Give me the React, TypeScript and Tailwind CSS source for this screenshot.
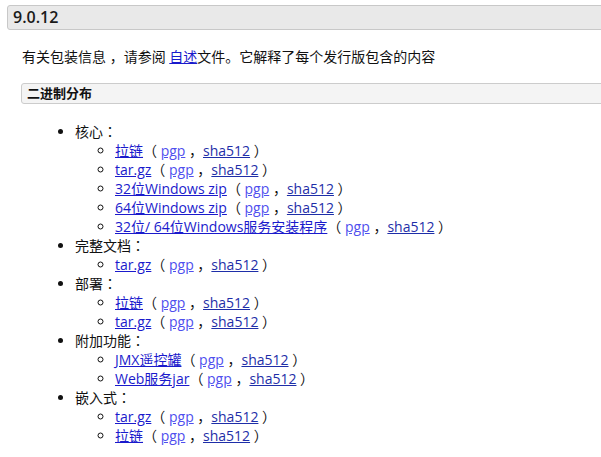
import React from "react";

type Item = { label: string };
type Group = { title: string; items: string[] };

const groups: Group[] = [
  {
    title: "核心",
    items: [
      "拉链",
      "tar.gz",
      "32位Windows zip",
      "64位Windows zip",
      "32位/ 64位Windows服务安装程序",
    ],
  },
  { title: "完整文档", items: ["tar.gz"] },
  { title: "部署", items: ["拉链", "tar.gz"] },
  { title: "附加功能", items: ["JMX遥控罐", "Web服务jar"] },
  { title: "嵌入式", items: ["tar.gz", "拉链"] },
];

function Row({ label }: Item) {
  return (
    <li className="list-[circle]">
      <a href="#" className="underline text-[#1a1acc]">
        {label}
      </a>
      （{" "}
      <a href="#" className="underline text-[#4f4fee]">
        pgp
      </a>{" "}
      ，
      <a href="#" className="underline text-[#1e2ea8]">
        sha512
      </a>{" "}
      ）
    </li>
  );
}

export default function App() {
  return (
    <div
      className="w-[601px] h-[457px] overflow-hidden bg-white text-[#111] text-[14px] leading-[19px]"
      style={{ fontFamily: '"Open Sans", "Noto Sans CJK SC", sans-serif' }}
    >
      <div className="pt-[5px] pl-[7px]">
        <div className="w-[620px] h-[25px] rounded-[3px] border border-[#c8c8c8] bg-[#e9e9e9] pl-[5px] flex items-center text-[16px] font-semibold text-[#1a1a1a]">
          9.0.12
        </div>
      </div>
      <div className="pl-[21px]">
        <p className="mt-[17px] pl-px">
          有关包装信息 ，请参阅{" "}
          <a href="#" className="underline text-[#1a1acc]">
            自述
          </a>
          文件。它解释了每个发行版包含的内容
        </p>
        <div className="mt-[17px] w-[600px] h-[21px] rounded-[3px] border border-[#cccccc] bg-[#f4f4f4] pl-[5px] flex items-center font-bold text-[13px] text-[#111]">
          二进制分布
        </div>
        <ul className="mt-[18px] pl-[54px] list-disc">
          {groups.map((g) => (
            <li key={g.title}>
              {g.title}
              <span className="[font-family:'Noto_Sans_CJK_TC',sans-serif]">：</span>
              <ul className="pl-10">
                {g.items.map((it, i) => (
                  <Row key={i} label={it} />
                ))}
              </ul>
            </li>
          ))}
        </ul>
      </div>
    </div>
  );
}
